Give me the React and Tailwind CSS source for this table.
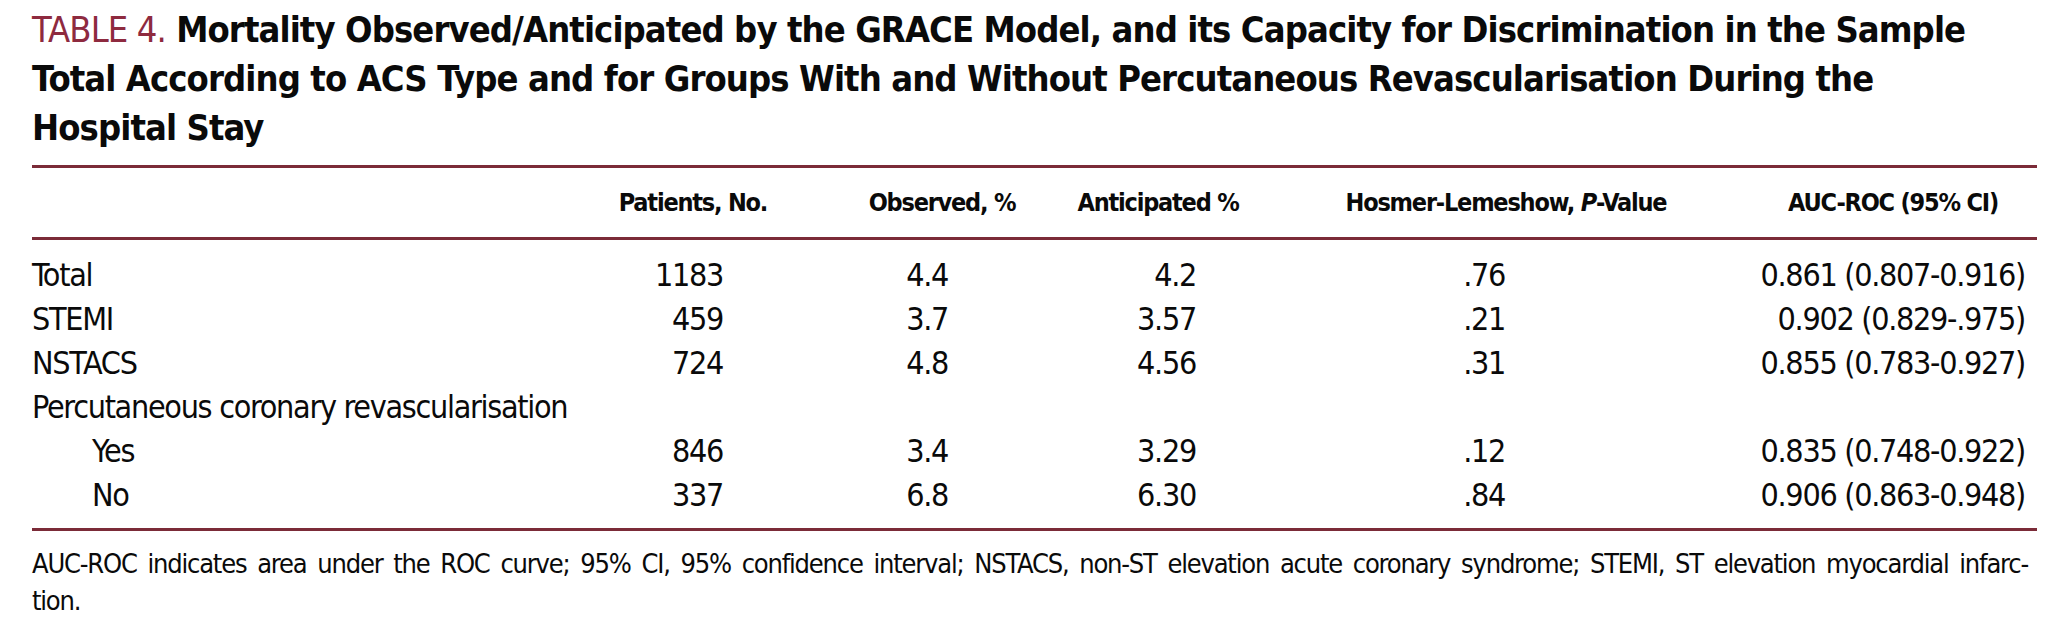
const rows = [
  { label: 'Total', n: '1183', obs: '4.4', ant: '4.2', hl: '.76', auc: '0.861 (0.807-0.916)' },
  { label: 'STEMI', n: '459', obs: '3.7', ant: '3.57', hl: '.21', auc: '0.902 (0.829-.975)' },
  { label: 'NSTACS', n: '724', obs: '4.8', ant: '4.56', hl: '.31', auc: '0.855 (0.783-0.927)' },
  { label: 'Percutaneous coronary revascularisation', group: true },
  { label: 'Yes', n: '846', obs: '3.4', ant: '3.29', hl: '.12', auc: '0.835 (0.748-0.922)', sub: true },
  { label: 'No', n: '337', obs: '6.8', ant: '6.30', hl: '.84', auc: '0.906 (0.863-0.948)', sub: true },
];

const cols = 'grid grid-cols-[568px_186px_312px_120px_576px_243px]';

export default function App() {
  return (
    <div className="w-[2070px] h-[637px] bg-white text-[#0a0a0a] pl-[32px] pt-[5px] font-['DejaVu_Sans_Condensed','Liberation_Sans',sans-serif]">
      <h1 className="w-[1990px] text-[36px] leading-[49px] font-bold tracking-[-0.9px]">
        <span className="font-normal text-[#8e2a3f]">TABLE 4.</span> Mortality Observed/Anticipated by the GRACE Model, and its Capacity for Discrimination in the Sample Total According to ACS Type and for Groups With and Without Percutaneous Revascularisation During the Hospital Stay
      </h1>

      <div className="w-[2005px] mt-[13px] border-t-[3px] border-[#7b2b38]">
        <div className={`${cols} h-[72px] items-center text-[25px] font-bold tracking-[-1.2px] whitespace-nowrap border-b-[3px] border-[#7b2b38]`}>
          <div></div>
          <div className="flex justify-center">Patients, No.</div>
          <div className="flex justify-center">Observed, %</div>
          <div className="flex justify-center">Anticipated %</div>
          <div className="flex justify-center">
            <span>
              Hosmer-Lemeshow, <i>P</i>-Value
            </span>
          </div>
          <div className="flex justify-center pr-[45px]">AUC-ROC (95% CI)</div>
        </div>

        <div className="pt-[11px] pb-[13px] border-b-[3px] border-[#7b2b38] text-[32px] tracking-[-1.3px] whitespace-nowrap">
          {rows.map((r) => (
            <div key={r.label} className={`${cols} h-[44px] items-center`}>
              <div className={r.sub ? 'pl-[60px]' : ''}>{r.label}</div>
              {!r.group && (
                <>
                  <div className="text-right pr-[63px]">{r.n}</div>
                  <div className="text-right pr-[150px]">{r.obs}</div>
                  <div className="text-right pr-[22px]">{r.ant}</div>
                  <div className="text-right pr-[289px]">{r.hl}</div>
                  <div className="flex justify-end pr-[12px]">{r.auc}</div>
                </>
              )}
            </div>
          ))}
        </div>

        <div className="pt-[14px] text-[27px] leading-[37px] tracking-[-1.2px] pr-[9px]">
          <div className="whitespace-nowrap text-justify [text-align-last:justify]">
            AUC-ROC indicates area under the ROC curve; 95% CI, 95% confidence interval; NSTACS, non-ST elevation acute coronary syndrome; STEMI, ST elevation myocardial infarc-
          </div>
          <div>tion.</div>
        </div>
      </div>
    </div>
  );
}
